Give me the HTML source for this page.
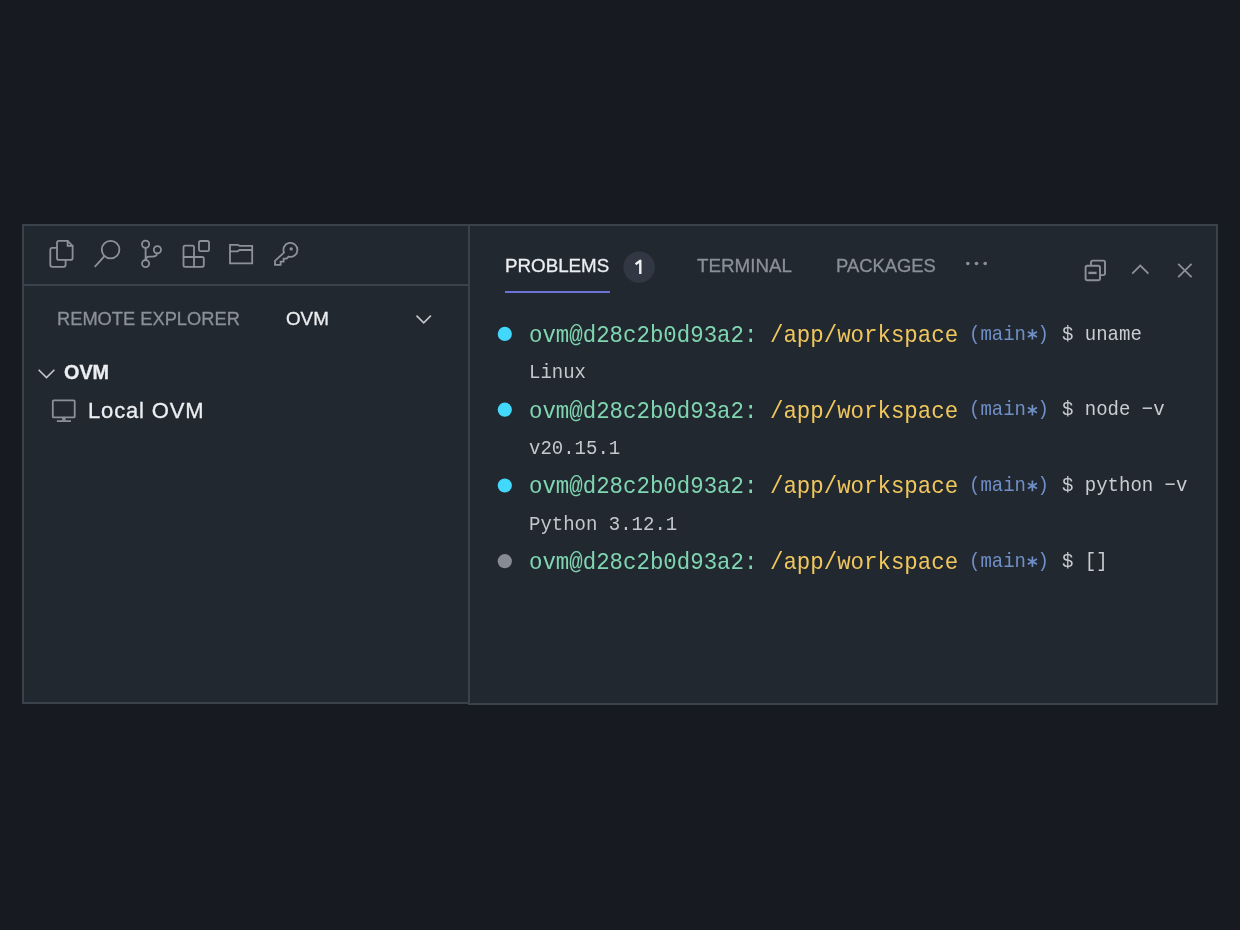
<!DOCTYPE html>
<html><head><meta charset="utf-8">
<style>
html,body{margin:0;padding:0;}
body{width:1240px;height:930px;background:#171a21;position:relative;overflow:hidden;font-family:"Liberation Sans",sans-serif;}
.abs{position:absolute;}
.panel{position:absolute;background:#222830;border:2px solid #3b424c;box-sizing:border-box;}
.t{position:absolute;white-space:nowrap;line-height:1;will-change:transform;}
.s{-webkit-text-stroke:0.3px currentColor;}
.mono{font-family:"Liberation Mono",monospace;}
.pr{font-size:22.4px;color:#7fd6b0;transform:scaleY(1.08);transform-origin:0 17.16px;}
.pa{font-size:22.4px;color:#f0c75c;transform:scaleY(1.08);transform-origin:0 17.16px;}
.br{font-size:19px;color:#6f8fc6;transform:scaleY(1.1);transform-origin:0 14.55px;}
.cm{font-size:19px;color:#c9ccd2;transform:scaleY(1.1);transform-origin:0 14.55px;}
.out{font-size:19px;color:#c4c7cd;transform:scaleY(1.05);transform-origin:0 14.55px;}
.ast{color:transparent;}
svg{position:absolute;overflow:visible;}
.ic{fill:none;stroke:#8c9199;stroke-width:1.8;stroke-linecap:round;stroke-linejoin:round;}
</style></head>
<body>
<!-- left panel -->
<div class="panel" style="left:22px;top:224px;width:448px;height:480px;"></div>
<!-- right panel -->
<div class="panel" style="left:468px;top:224px;width:750px;height:481px;"></div>
<!-- toolbar separator -->
<div class="abs" style="left:22px;top:284px;width:448px;height:2px;background:#3b424c;"></div>

<!-- toolbar icons -->
<svg width="1240" height="930" style="left:0;top:0;">
  <!-- copy -->
  <g class="ic">
    <path d="M57,247.8 H52.3 Q50.3,247.8 50.3,249.8 V264.8 Q50.3,266.8 52.3,266.8 H63.6 Q65.6,266.8 65.6,264.8 V259.9"/>
    <path d="M59,240.9 H67.6 L72.6,245.9 V257.9 Q72.6,259.9 70.6,259.9 H59 Q57,259.9 57,257.9 V242.9 Q57,240.9 59,240.9 Z"/>
    <path d="M67.6,240.9 V245.9 H72.6"/>
  </g>
  <!-- search -->
  <g class="ic">
    <circle cx="110.6" cy="249.6" r="8.8"/>
    <path d="M104,256.6 L95.2,266.4"/>
  </g>
  <!-- git -->
  <g class="ic">
    <circle cx="145.6" cy="244.3" r="3.6"/>
    <circle cx="145.6" cy="263.6" r="3.6"/>
    <circle cx="157.4" cy="249.8" r="3.6"/>
    <path d="M145.6,247.9 V260"/>
    <path d="M157.2,253.4 Q156.4,256.7 152.6,256.7 H149.6 Q145.6,256.7 145.6,260.2"/>
  </g>
  <!-- extensions -->
  <g class="ic">
    <path d="M183.5,257 V247.2 Q183.5,245.6 185.1,245.6 H192.4 Q194,245.6 194,247.2 V257"/>
    <path d="M183.5,257 H202.2 Q203.8,257 203.8,258.6 V265.2 Q203.8,266.8 202.2,266.8 H185.1 Q183.5,266.8 183.5,265.2 Z"/>
    <path d="M194,257 V266.8"/>
    <rect x="199" y="241" width="10" height="10.2" rx="1.6"/>
  </g>
  <!-- folder -->
  <g class="ic" style="stroke-linejoin:miter;stroke-linecap:butt">
    <path d="M230,244.8 H237.6 L239.6,245.9 H252.2 V263.4 H230 Z"/>
    <path d="M230,251.3 H237.6 L239.6,250 H252.2"/>
  </g>
  <!-- key -->
  <g class="ic" style="stroke-linejoin:miter;stroke-linecap:butt">
    <path d="M284,252.6 A7,7 0 1 1 288.6,256.6 L286.6,258.6 H283.6 V261.6 H280.6 V264.8 H275 V260.8 Z"/>
  </g>
  <circle cx="291.2" cy="248.9" r="1.7" fill="#8c9199"/>

  <!-- restore -->
  <g class="ic" style="stroke-width:1.9">
    <path d="M1091,264.4 V262.4 Q1091,260.6 1092.8,260.6 H1103.2 Q1105,260.6 1105,262.4 V273.3 Q1105,275.1 1103.2,275.1 H1101"/>
    <rect x="1085.6" y="265.8" width="14.4" height="14.4" rx="1.8"/>
  </g>
  <path d="M1088.4,272.9 H1096.6" stroke="#8c9199" stroke-width="2.4"/>
  <!-- chevron up -->
  <path d="M1132.2,273.6 L1140.3,265.6 L1148.4,273.6" fill="none" stroke="#8c9199" stroke-width="1.8"/>
  <!-- close -->
  <path d="M1178.2,263.8 L1191.6,277.2 M1191.6,263.8 L1178.2,277.2" fill="none" stroke="#8c9199" stroke-width="1.8"/>

  <!-- dropdown chevron -->
  <path d="M416.5,315.6 L423.7,322.8 L430.9,315.6" fill="none" stroke="#c3c6cc" stroke-width="1.6"/>
  <!-- tree chevron -->
  <path d="M38.6,369.8 L46.5,377.6 L54.4,369.8" fill="none" stroke="#c3c6cc" stroke-width="1.6"/>
  <!-- monitor -->
  <g class="ic" style="stroke-linejoin:miter;stroke-linecap:butt">
    <rect x="52.8" y="400.4" width="21.9" height="17" rx="1"/>
    <path d="M56.9,421.1 H70.9"/>
  </g>

  <rect x="62.2" y="417.8" width="3.4" height="2.6" fill="#8c9199"/>
  <!-- badge -->
  <circle cx="639.1" cy="267.1" r="15.7" fill="#323843"/>
  <path d="M635.6,264.2 L640.3,260.8 V274.1" fill="none" stroke="#eef0f3" stroke-width="2.4" stroke-linejoin="round"/>
  <!-- underline -->
  <rect x="505" y="291" width="105" height="2" fill="#6c72d8"/>
  <!-- more dots -->
  <circle cx="967.8" cy="263.5" r="1.8" fill="#8c9199"/>
  <circle cx="976.5" cy="263.5" r="1.8" fill="#8c9199"/>
  <circle cx="985.2" cy="263.5" r="1.8" fill="#8c9199"/>

  <!-- asterisks -->
  <path d="M1032.40,329.00 V339.60 M1027.81,331.65 L1036.99,336.95 M1027.81,336.95 L1036.99,331.65" stroke="#6f8fc6" stroke-width="1.7" fill="none"/>
  <path d="M1032.40,404.80 V415.40 M1027.81,407.45 L1036.99,412.75 M1027.81,412.75 L1036.99,407.45" stroke="#6f8fc6" stroke-width="1.7" fill="none"/>
  <path d="M1032.40,480.60 V491.20 M1027.81,483.25 L1036.99,488.55 M1027.81,488.55 L1036.99,483.25" stroke="#6f8fc6" stroke-width="1.7" fill="none"/>
  <path d="M1032.40,556.40 V567.00 M1027.81,559.05 L1036.99,564.35 M1027.81,564.35 L1036.99,559.05" stroke="#6f8fc6" stroke-width="1.7" fill="none"/>
  <!-- terminal dots -->
  <circle cx="504.8" cy="333.9" r="7.1" fill="#42d8fb"/>
  <circle cx="504.8" cy="409.7" r="7.1" fill="#42d8fb"/>
  <circle cx="504.8" cy="485.5" r="7.1" fill="#42d8fb"/>
  <circle cx="504.8" cy="561.2" r="7.1" fill="#868b94"/>
</svg>

<!-- left texts -->
<div class="t s" style="left:57px;top:310px;font-size:18.3px;color:#8a9099;">REMOTE EXPLORER</div>
<div class="t s" style="left:286px;top:310px;font-size:18.8px;color:#eceef1;">OVM</div>
<div class="t s" style="left:64px;top:362.5px;font-size:19.8px;font-weight:bold;color:#eceef1;">OVM</div>
<div class="t s" style="left:87.6px;top:400px;font-size:22px;letter-spacing:0.85px;color:#eceef1;">Local OVM</div>

<!-- tabs -->
<div class="t s" style="left:505px;top:257px;font-size:18.75px;color:#eceef1;">PROBLEMS</div>
<div class="t s" style="left:697px;top:257px;font-size:18.8px;color:#8a9099;">TERMINAL</div>
<div class="t s" style="left:836px;top:257px;font-size:18.4px;color:#8a9099;">PACKAGES</div>

<!-- terminal -->
<div class="t mono pr" style="left:529px;top:324.84px;">ovm@d28c2b0d93a2:</div>
<div class="t mono pa" style="left:769.6px;top:324.84px;">/app/workspace</div>
<div class="t mono br" style="left:968.9px;top:325.65px;">(main<span class="ast">*</span>)</div>
<div class="t mono cm" style="left:1061.6px;top:325.65px;">$ uname</div>
<div class="t mono out" style="left:528.9px;top:364.15px;">Linux</div>
<div class="t mono pr" style="left:529px;top:400.64px;">ovm@d28c2b0d93a2:</div>
<div class="t mono pa" style="left:769.6px;top:400.64px;">/app/workspace</div>
<div class="t mono br" style="left:968.9px;top:401.45px;">(main<span class="ast">*</span>)</div>
<div class="t mono cm" style="left:1061.6px;top:401.45px;">$ node −v</div>
<div class="t mono out" style="left:528.9px;top:439.95px;">v20.15.1</div>
<div class="t mono pr" style="left:529px;top:476.44px;">ovm@d28c2b0d93a2:</div>
<div class="t mono pa" style="left:769.6px;top:476.44px;">/app/workspace</div>
<div class="t mono br" style="left:968.9px;top:477.25px;">(main<span class="ast">*</span>)</div>
<div class="t mono cm" style="left:1061.6px;top:477.25px;">$ python −v</div>
<div class="t mono out" style="left:528.9px;top:515.75px;">Python 3.12.1</div>
<div class="t mono pr" style="left:529px;top:552.24px;">ovm@d28c2b0d93a2:</div>
<div class="t mono pa" style="left:769.6px;top:552.24px;">/app/workspace</div>
<div class="t mono br" style="left:968.9px;top:553.05px;">(main<span class="ast">*</span>)</div>
<div class="t mono cm" style="left:1061.6px;top:553.05px;">$ []</div>
</body></html>
